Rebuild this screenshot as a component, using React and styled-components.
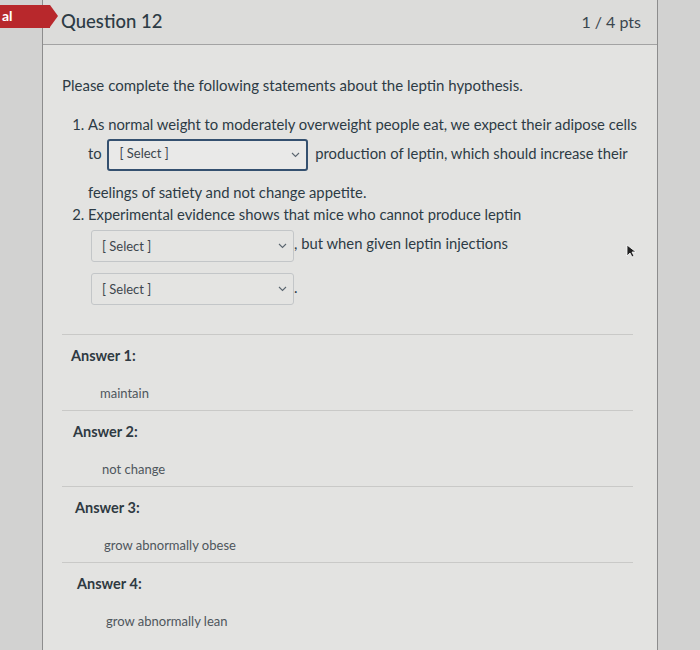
import React from "react";
import styled, { createGlobalStyle } from "styled-components";

const Global = createGlobalStyle`
  html, body { margin: 0; padding: 0; }
  body {
    background: #d2d2d1;
    font-family: Lato, "Noto Sans", sans-serif;
    color: #2d3b45;
  }
`;

const Page = styled.div`
  position: relative;
  display: flex;
  width: 700px;
  height: 650px;
  overflow: hidden;
`;

const Gutter = styled.div`
  width: 42px;
  flex: none;
`;

const Tag = styled.div`
  position: absolute;
  left: 0;
  top: 5px;
  height: 23px;
  width: 48px;
  background: #b8282c;
  color: #fff;
  font-size: 14px;
  font-weight: 700;
  line-height: 21px;
  padding-left: 2px;
  &::after {
    content: "";
    position: absolute;
    right: -8px;
    top: 0;
    border-top: 11.5px solid transparent;
    border-bottom: 11.5px solid transparent;
    border-left: 8px solid #b8282c;
  }
`;

const Card = styled.div`
  width: 614px;
  flex: none;
  background: #e3e3e1;
  border-left: 1px solid #8d8d8d;
  border-right: 1px solid #8d8d8d;
  overflow: hidden;
`;

const Header = styled.div`
  height: 45px;
  box-sizing: border-box;
  border-bottom: 1px solid #a3a3a3;
  background: #dcdcda;
  display: flex;
  align-items: center;
  justify-content: space-between;
  padding: 0 16px 2px 18px;
`;

const Title = styled.div`
  font-size: 18.5px;
  font-weight: 500;
  color: #2d3b45;
`;

const Points = styled.div`
  font-size: 16px;
  color: #3a464e;
`;

const Body = styled.div`
  padding: 29px 24px 0 19px;
`;

const Intro = styled.p`
  margin: 0;
  font-size: 15px;
  line-height: 22px;
  white-space: nowrap;
`;

const List = styled.ol`
  margin: 17px 0 0 0;
  padding-left: 26px;
  font-size: 14.8px;
  line-height: 22px;
`;

const Item = styled.li`
  padding-left: 0;
`;

const SelectBox = styled.span`
  display: inline-flex;
  align-items: center;
  justify-content: space-between;
  vertical-align: middle;
  box-sizing: border-box;
  width: ${(p) => p.$w || 203}px;
  height: ${(p) => p.$h || 32}px;
  padding: 0 6px 0 10px;
  background: ${(p) => (p.$focus ? "#e9e9e8" : "#e4e4e2")};
  border: ${(p) => (p.$focus ? "2px solid #34506f" : "1px solid #c3c6c8")};
  border-radius: 3px;
  font-size: 13px;
  color: #3d464d;
  margin: ${(p) => p.$m || "0"};
`;

const SelectLabel = styled.span`
  align-self: ${(p) => (p.$top ? "flex-start" : "center")};
  margin-top: ${(p) => (p.$top ? 3 : 0)}px;
  line-height: 18px;
`;

const Chevron = () => (
  <svg width="9" height="6" viewBox="0 0 9 6" fill="none">
    <path d="M1 1l3.5 3.5L8 1" stroke="#5b6670" strokeWidth="1.1" />
  </svg>
);

const Select = ({ focus, w, m }) => (
  <SelectBox $focus={focus} $w={w} $m={m}>
    <SelectLabel $top={focus}>[ Select ]</SelectLabel>
    <Chevron />
  </SelectBox>
);

const Line = styled.span`
  display: block;
  white-space: nowrap;
  line-height: ${(p) => p.$lh || 22}px;
  margin-top: ${(p) => p.$mt || 0}px;
`;

const Answers = styled.div`
  margin-top: 22px;
`;

const AnswerBlock = styled.div`
  border-top: 1px solid #c9c9c7;
  padding: 11px 0 8px ${(p) => p.$indent || 0}px;
  height: 76px;
  box-sizing: border-box;
`;

const AnswerTitle = styled.div`
  font-size: 14.5px;
  font-weight: 700;
  color: #2f3a42;
  line-height: 20px;
  padding-left: 9px;
`;

const AnswerValue = styled.div`
  font-size: 13px;
  color: #4e565c;
  line-height: 18px;
  margin-top: 18px;
  padding-left: 38px;
`;

const Cursor = styled.svg`
  position: absolute;
  left: 626px;
  top: 244px;
`;

const answers = [
  ["Answer 1:", "maintain", 0],
  ["Answer 2:", "not change", 2],
  ["Answer 3:", "grow abnormally obese", 4],
  ["Answer 4:", "grow abnormally lean", 6],
];

export default function App() {
  return (
    <>
      <Global />
      <Page>
        <Tag>al</Tag>
        <Gutter />
        <Card>
          <Header>
            <Title>Question 12</Title>
            <Points>1 / 4 pts</Points>
          </Header>
          <Body>
            <Intro>
              Please complete the following statements about the leptin hypothesis.
            </Intro>
            <List>
              <Item>
                <Line>
                  As normal weight to moderately overweight people eat, we expect their adipose cells
                </Line>
                <Line $lh={36}>
                  to <Select focus w={201} m="0 3px 0 2px" /> production of leptin, which should increase their
                </Line>
                <Line $mt={10}>feelings of satiety and not change appetite.</Line>
              </Item>
              <Item>
                <Line>Experimental evidence shows that mice who cannot produce leptin</Line>
                <Line $lh={36}>
                  <Select w={203} m="0 0 0 3px" />, but when given leptin injections
                </Line>
                <Line $lh={50}>
                  <Select w={203} m="0 0 0 3px" />.
                </Line>
              </Item>
            </List>
            <Answers>
              {answers.map(([t, v, i]) => (
                <AnswerBlock key={t} $indent={i}>
                  <AnswerTitle>{t}</AnswerTitle>
                  <AnswerValue>{v}</AnswerValue>
                </AnswerBlock>
              ))}
            </Answers>
          </Body>
        </Card>
        <Cursor width="10" height="14" viewBox="0 0 10 14">
          <path d="M1 1v11l3-3 2 4 2-1-2-4h4z" fill="#222" stroke="#fff" strokeWidth="0.8" />
        </Cursor>
      </Page>
    </>
  );
}
